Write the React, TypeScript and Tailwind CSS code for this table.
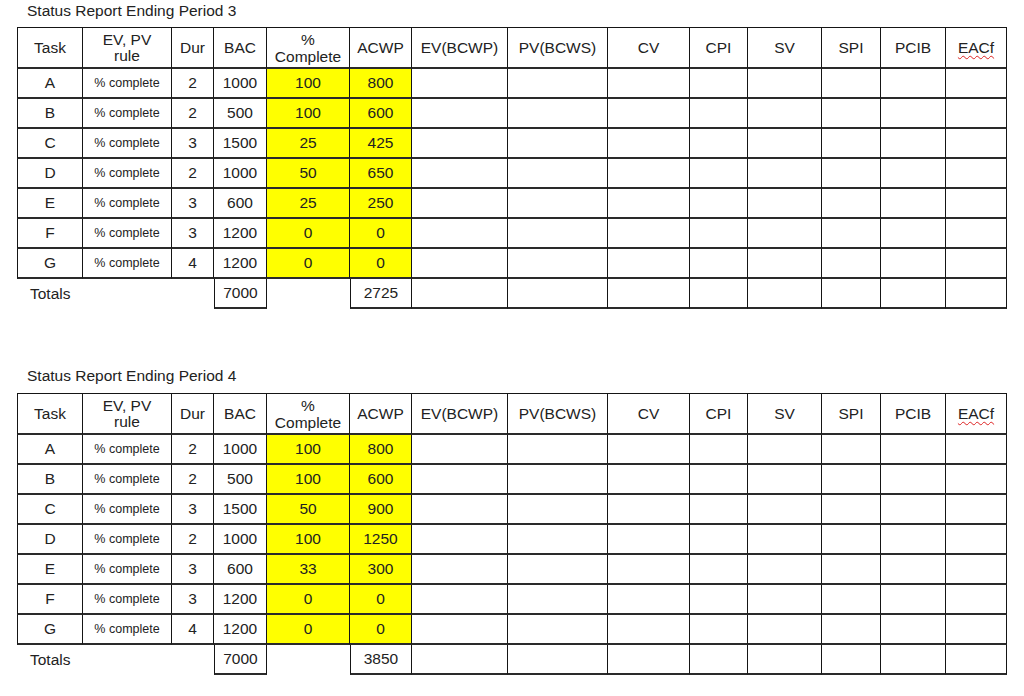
import React from 'react';

type Row = { task: string; dur: number; bac: number; pct: number; acwp: number };

const COLS = 'grid-cols-[66px_89px_42px_53px_83px_62px_96px_100px_82px_58px_74px_59px_65px_61px]';

const PERIOD3: Row[] = [
  { task: 'A', dur: 2, bac: 1000, pct: 100, acwp: 800 },
  { task: 'B', dur: 2, bac: 500, pct: 100, acwp: 600 },
  { task: 'C', dur: 3, bac: 1500, pct: 25, acwp: 425 },
  { task: 'D', dur: 2, bac: 1000, pct: 50, acwp: 650 },
  { task: 'E', dur: 3, bac: 600, pct: 25, acwp: 250 },
  { task: 'F', dur: 3, bac: 1200, pct: 0, acwp: 0 },
  { task: 'G', dur: 4, bac: 1200, pct: 0, acwp: 0 },
];

const PERIOD4: Row[] = [
  { task: 'A', dur: 2, bac: 1000, pct: 100, acwp: 800 },
  { task: 'B', dur: 2, bac: 500, pct: 100, acwp: 600 },
  { task: 'C', dur: 3, bac: 1500, pct: 50, acwp: 900 },
  { task: 'D', dur: 2, bac: 1000, pct: 100, acwp: 1250 },
  { task: 'E', dur: 3, bac: 600, pct: 33, acwp: 300 },
  { task: 'F', dur: 3, bac: 1200, pct: 0, acwp: 0 },
  { task: 'G', dur: 4, bac: 1200, pct: 0, acwp: 0 },
];

const cell = 'flex items-center justify-center text-center border-r border-b-2 border-r-[#151515] border-b-[#2a2a2a]';
const blanks = ['EV(BCWP)', 'PV(BCWS)', 'CV', 'CPI', 'SV', 'SPI', 'PCIB', 'EACf'];

function ReportTable({ rows, totalAcwp }: { rows: Row[]; totalAcwp: number }) {
  return (
    <div className={`grid ${COLS} text-[15.5px] text-[#222]`}>
      {/* header */}
      <div className={`${cell} h-[42px] border-l border-l-[#151515] border-t border-t-[#151515]`}>Task</div>
      <div className={`${cell} h-[42px] border-t border-t-[#151515] leading-[16px]`}>EV, PV<br />rule</div>
      <div className={`${cell} h-[42px] border-t border-t-[#151515]`}>Dur</div>
      <div className={`${cell} h-[42px] border-t border-t-[#151515]`}>BAC</div>
      <div className={`${cell} h-[42px] border-t border-t-[#151515] leading-[17px]`}>%<br />Complete</div>
      <div className={`${cell} h-[42px] border-t border-t-[#151515]`}>ACWP</div>
      {blanks.map((h) => (
        <div key={h} className={`${cell} h-[42px] border-t border-t-[#151515]`}>
          {h === 'EACf' ? <span className="underline decoration-wavy decoration-[#d22] decoration-1 underline-offset-2">EACf</span> : h}
        </div>
      ))}

      {rows.map((r) => (
        <React.Fragment key={r.task}>
          <div className={`${cell} h-[30px] border-l border-l-[#151515]`}>{r.task}</div>
          <div className={`${cell} h-[30px] text-[12.5px]`}>% complete</div>
          <div className={`${cell} h-[30px]`}>{r.dur}</div>
          <div className={`${cell} h-[30px]`}>{r.bac}</div>
          <div className={`${cell} h-[30px] bg-[#ffff00]`}>{r.pct}</div>
          <div className={`${cell} h-[30px] bg-[#ffff00]`}>{r.acwp}</div>
          {blanks.map((h) => (
            <div key={h} className={`${cell} h-[30px]`} />
          ))}
        </React.Fragment>
      ))}

      {/* totals */}
      <div className="col-span-3 h-[30px] flex items-center pl-[13px]">Totals</div>
      <div className={`${cell} h-[30px] border-l border-l-[#151515]`}>7000</div>
      <div className="h-[30px]" />
      <div className={`${cell} h-[30px] border-l border-l-[#151515]`}>{totalAcwp}</div>
      {blanks.map((h) => (
        <div key={h} className={`${cell} h-[30px]`} />
      ))}
    </div>
  );
}

export default function App() {
  return (
    <div className="w-[1024px] h-[696px] bg-white pl-[17px] overflow-hidden" style={{ fontFamily: '"Liberation Sans", Arial, sans-serif' }}>
      <div className="h-[27px] flex items-end pb-[7px] pl-[10px] text-[15.5px] leading-[18px] text-[#222]">
        Status Report Ending Period 3
      </div>
      <ReportTable rows={PERIOD3} totalAcwp={2725} />
      <div className="h-[84px] flex items-end pb-[8px] pl-[10px] text-[15.5px] leading-[18px] text-[#222]">
        Status Report Ending Period 4
      </div>
      <ReportTable rows={PERIOD4} totalAcwp={3850} />
    </div>
  );
}
